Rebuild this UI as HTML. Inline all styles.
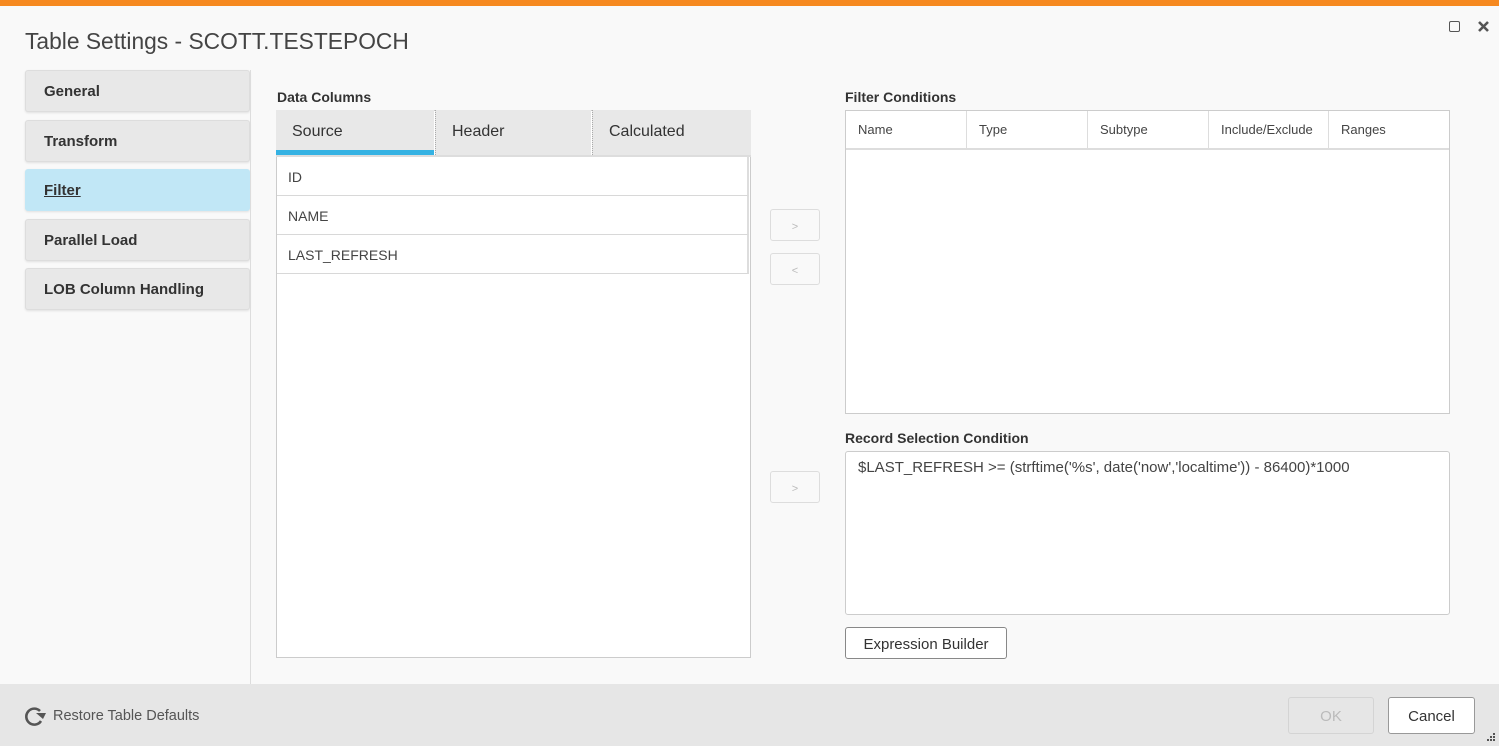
<!DOCTYPE html>
<html><head><style>
*{box-sizing:border-box;margin:0;padding:0}
body{width:1499px;height:746px;background:#f9f9f9;font-family:"Liberation Sans",sans-serif;color:#333;position:relative;overflow:hidden}
.a{position:absolute}
.nav{position:absolute;left:25px;width:225px;height:42px;background:#e8e8e8;border:1px solid #ddd;border-radius:3px;font-size:15px;font-weight:bold;color:#333;padding:12px 0 0 18px;box-shadow:0 1px 2px rgba(0,0,0,.1)}
.lbl{position:absolute;font-size:14px;font-weight:bold;color:#333}
.tab{position:absolute;top:110px;height:45px;background:#e8e8e8;font-size:16px;color:#333;padding:13px 0 0 16px}
.row{position:absolute;left:277px;width:472px;height:39px;border-bottom:1px solid #d8d8d8;background:#fff;font-size:14px;color:#444;padding:12px 0 0 11px;border-right:2px solid #ddd}
.mv{position:absolute;left:770px;width:50px;height:32px;border:1px solid #ddd;border-radius:3px;font-size:11px;color:#bbb;text-align:center;line-height:34px;background:#f9f9f9}
.th{position:absolute;top:111px;height:38px;font-size:13px;color:#444;padding:11px 0 0 12px;border-right:1px solid #ddd}
</style></head><body>
<div class="a" style="left:0;top:0;width:1499px;height:6px;background:#f68920"></div>
<div class="a" style="left:25px;top:28px;font-size:22.8px;color:#444">Table Settings - SCOTT.TESTEPOCH</div>
<div class="a" style="left:1449px;top:21px;width:11px;height:11px;border:1.5px solid #555;border-radius:2px"></div>
<svg class="a" style="left:1477px;top:20px" width="13" height="13"><path d="M2 2L11 11M11 2L2 11" stroke="#555" stroke-width="2.6"/></svg>
<div class="nav" style="top:70px">General</div>
<div class="nav" style="top:120px">Transform</div>
<div class="nav" style="top:169px;background:#c1e7f6;border-color:#c1e7f6;text-decoration:underline">Filter</div>
<div class="nav" style="top:219px">Parallel Load</div>
<div class="nav" style="top:268px">LOB Column Handling</div>
<div class="a" style="left:250px;top:70px;width:1px;height:614px;background:#ddd"></div>

<div class="lbl" style="left:277px;top:89px">Data Columns</div>
<div class="a" style="left:276px;top:110px;width:475px;height:548px;background:#fff;border:1px solid #ccc"></div>
<div class="tab" style="left:276px;width:158px">Source</div>
<div class="a" style="left:276px;top:150px;width:158px;height:5px;background:#35b2e3"></div>
<div class="tab" style="left:435px;width:156px;border-left:1px dotted #aaa">Header</div>
<div class="tab" style="left:592px;width:159px;border-left:1px dotted #aaa">Calculated</div>
<div class="a" style="left:276px;top:155px;width:475px;height:2px;background:#ddd"></div>
<div class="row" style="top:157px">ID</div>
<div class="row" style="top:196px">NAME</div>
<div class="row" style="top:235px">LAST_REFRESH</div>

<div class="mv" style="top:209px">&gt;</div>
<div class="mv" style="top:253px">&lt;</div>
<div class="mv" style="top:471px">&gt;</div>

<div class="lbl" style="left:845px;top:89px">Filter Conditions</div>
<div class="a" style="left:845px;top:110px;width:605px;height:304px;background:#fff;border:1px solid #ccc"></div>
<div class="th" style="left:846px;width:121px">Name</div>
<div class="th" style="left:967px;width:121px">Type</div>
<div class="th" style="left:1088px;width:121px">Subtype</div>
<div class="th" style="left:1209px;width:120px">Include/Exclude</div>
<div class="th" style="left:1329px;width:120px;border-right:none">Ranges</div>
<div class="a" style="left:846px;top:148px;width:603px;height:2px;background:#ddd"></div>

<div class="lbl" style="left:845px;top:430px">Record Selection Condition</div>
<div class="a" style="left:845px;top:451px;width:605px;height:164px;background:#fff;border:1px solid #ccc;border-radius:3px;font-size:15px;color:#444;padding:7px 12px">$LAST_REFRESH &gt;= (strftime('%s', date('now','localtime')) - 86400)*1000</div>
<div class="a" style="left:845px;top:627px;width:162px;height:32px;background:#fff;border:1px solid #888;border-radius:3px;font-size:15px;color:#333;text-align:center;line-height:33px">Expression Builder</div>

<div class="a" style="left:0;top:684px;width:1499px;height:62px;background:#e6e6e6"></div>
<svg class="a" style="left:24px;top:705px" width="24" height="22" viewBox="0 0 24 22"><path d="M16 6A8 8 0 1 0 17 16" fill="none" stroke="#555" stroke-width="2.6"/><path d="M12 8L22 8L19 14Z" fill="#555"/></svg>
<div class="a" style="left:53px;top:708px;font-size:14.5px;color:#555">Restore Table Defaults</div>
<div class="a" style="left:1288px;top:697px;width:86px;height:37px;border:1px solid #d4d4d4;border-radius:3px;font-size:15px;color:#bbb;text-align:center;line-height:38px">OK</div>
<div class="a" style="left:1388px;top:697px;width:87px;height:37px;border:1px solid #999;border-radius:3px;background:#fff;font-size:15px;color:#333;text-align:center;line-height:38px">Cancel</div>
<svg class="a" style="left:1486px;top:732px" width="10" height="10"><g fill="#555"><rect x="7" y="1" width="2" height="2"/><rect x="4" y="4" width="2" height="2"/><rect x="7" y="4" width="2" height="2"/><rect x="1" y="7" width="2" height="2"/><rect x="4" y="7" width="2" height="2"/><rect x="7" y="7" width="2" height="2"/></g></svg>
</body></html>
